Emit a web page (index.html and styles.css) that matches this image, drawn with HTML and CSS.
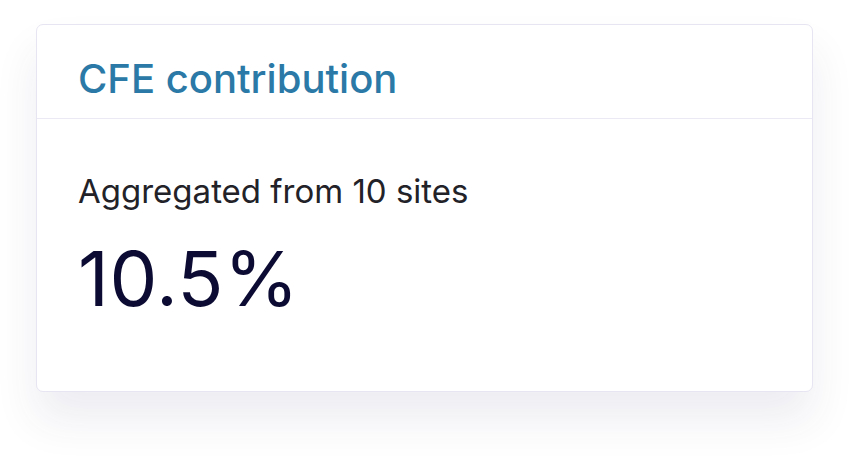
FILE: index.html
```html
<!DOCTYPE html>
<html>
<head>
<meta charset="utf-8">
<link rel="stylesheet" href="styles.css">
</head>
<body>
<div class="card">
  <div class="card-header">
    <h2 class="title">CFE contribution</h2>
  </div>
  <div class="card-body">
    <p class="label">Aggregated from 10 sites</p>
    <p class="value">10.5%</p>
  </div>
</div>
</body>
</html>
```

FILE: styles.css
```css
html, body {
  margin: 0;
  padding: 0;
  background: #ffffff;
}
body {
  padding: 24px 0 0 36px;
  height: 456px;
  box-sizing: border-box;
  font-family: Inter, "Noto Sans", sans-serif;
}
.card {
  width: 775px;
  height: 366px;
  border: 1px solid #e7e5f2;
  border-radius: 7px;
  background: #fff;
  box-shadow: 0 28px 44px rgba(50, 50, 110, 0.09);
  box-sizing: content-box;
}
.card-header {
  height: 94px;
  box-sizing: border-box;
  border-bottom: 1px solid #ebe9f4;
  display: flex;
  align-items: center;
  padding: 14px 41px 0;
}
.title {
  margin: 0;
  font-size: 40px;
  font-weight: 500;
  color: #2a79a6;
}
.card-body {
  padding: 52px 41px 0;
}
.label {
  margin: 0;
  font-size: 33px;
  font-weight: 400;
  color: #222228;
}
.value {
  margin: 22px 0 0;
  font-size: 76px;
  font-weight: 400;
  color: #0b0b33;
  line-height: 1.2;
  letter-spacing: 0.5px;
}
```
